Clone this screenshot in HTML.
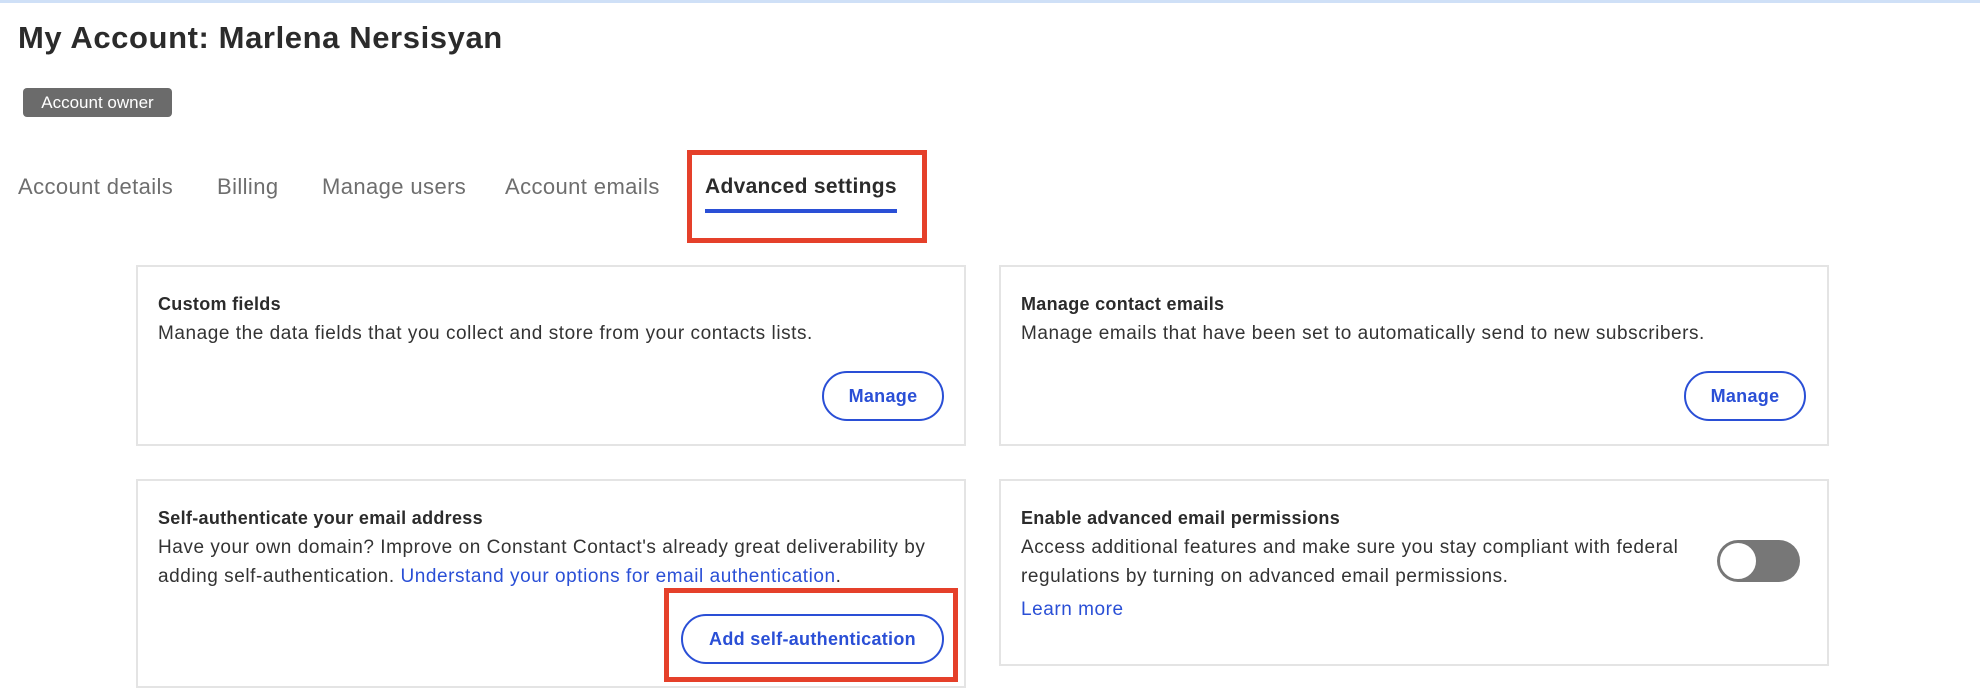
<!DOCTYPE html>
<html><head><meta charset="utf-8"><style>
*{box-sizing:border-box;margin:0;padding:0}
body{width:1980px;height:689px;background:#fff;font-family:"Liberation Sans",sans-serif;color:#2b2b2b;position:relative;overflow:hidden}
.topline{position:absolute;left:0;top:0;width:1980px;height:3px;background:#cfe0f7}
h1{position:absolute;left:18px;top:20px;font-size:31px;font-weight:bold;color:#2b2b2b;letter-spacing:0.6px}
.badge{position:absolute;left:23px;top:88px;width:149px;height:29px;background:#6b6b6b;color:#fff;border-radius:4px;font-size:17px;line-height:29px;text-align:center}
.tab{position:absolute;top:174px;font-size:22px;color:#6e6e6e;letter-spacing:0.4px}
.tab.act{color:#2b2b2b;font-weight:bold;font-size:21px;letter-spacing:0.3px}
.ul{position:absolute;left:705px;top:209px;width:192px;height:4px;background:#2a4fd6}
.red{position:absolute;border:5px solid #e5402a}
.card{position:absolute;border:2px solid #e4e4e4;background:#fff}
.ct{position:absolute;left:20px;font-size:18px;font-weight:bold;color:#2b2b2b;letter-spacing:0.3px}
.cd{position:absolute;left:20px;font-size:19px;line-height:29px;color:#333;letter-spacing:0.55px;white-space:nowrap}
.btn{position:absolute;border:2px solid #2a4fd6;border-radius:26px;color:#2a4fd6;font-weight:bold;font-size:18px;text-align:center;background:#fff;letter-spacing:0.3px}
a{color:#2a4fd6;text-decoration:none}
.tog{position:absolute;left:1717px;top:540px;width:83px;height:42px;border-radius:21px;background:#777}
.knob{position:absolute;left:1px;top:1px;width:40px;height:40px;border-radius:50%;background:#fff;border:2px solid #777}
</style></head><body>
<div class="topline"></div>
<h1>My Account: Marlena Nersisyan</h1>
<div class="badge">Account owner</div>
<div class="tab" style="left:18px">Account details</div>
<div class="tab" style="left:217px">Billing</div>
<div class="tab" style="left:322px">Manage users</div>
<div class="tab" style="left:505px">Account emails</div>
<div class="tab act" style="left:705px;top:175px">Advanced settings</div>
<div class="ul"></div>
<div class="red" style="left:687px;top:150px;width:240px;height:93px"></div>

<div class="card" style="left:136px;top:265px;width:830px;height:181px">
<div class="ct" style="top:27px">Custom fields</div>
<div class="cd" style="top:52px">Manage the data fields that you collect and store from your contacts lists.</div>
<div class="btn" style="left:684px;top:104px;width:122px;height:50px;line-height:46px">Manage</div>
</div>
<div class="card" style="left:999px;top:265px;width:830px;height:181px">
<div class="ct" style="top:27px">Manage contact emails</div>
<div class="cd" style="top:52px">Manage emails that have been set to automatically send to new subscribers.</div>
<div class="btn" style="left:683px;top:104px;width:122px;height:50px;line-height:46px">Manage</div>
</div>
<div class="card" style="left:136px;top:479px;width:830px;height:209px">
<div class="ct" style="top:27px">Self-authenticate your email address</div>
<div class="cd" style="top:52px">Have your own domain? Improve on Constant Contact's already great deliverability by<br>adding self-authentication. <a>Understand your options for email authentication</a>.</div>
<div class="btn" style="left:543px;top:133px;width:263px;height:50px;line-height:46px">Add self-authentication</div>
</div>
<div class="red" style="left:664px;top:588px;width:294px;height:94px"></div>
<div class="card" style="left:999px;top:479px;width:830px;height:187px">
<div class="ct" style="top:27px">Enable advanced email permissions</div>
<div class="cd" style="top:52px">Access additional features and make sure you stay compliant with federal<br>regulations by turning on advanced email permissions.</div>
<div class="cd" style="top:114px"><a>Learn more</a></div>
</div>
<div class="tog"><div class="knob"></div></div>
</body></html>
